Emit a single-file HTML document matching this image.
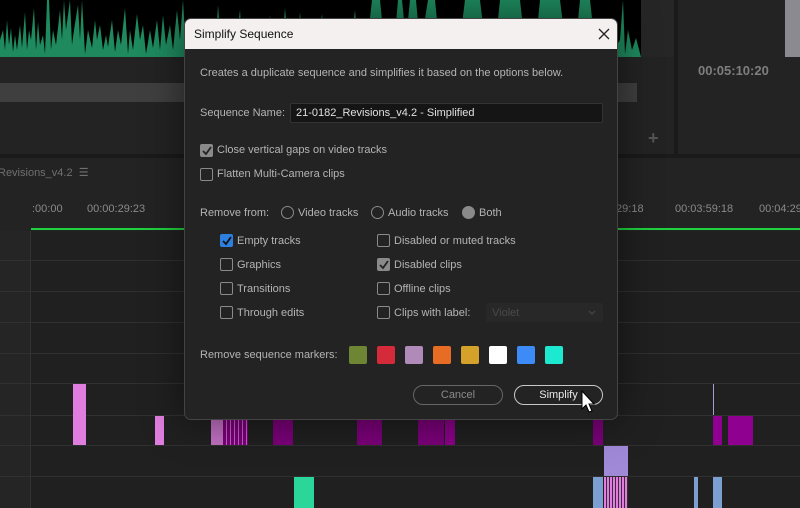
<!DOCTYPE html>
<html><head><meta charset="utf-8"><style>
*{margin:0;padding:0;box-sizing:border-box}
body{width:800px;height:508px;overflow:hidden;background:#232323;font-family:"Liberation Sans",sans-serif;position:relative}
.a{position:absolute}
.t{color:#b4b4b4;font-size:11px;white-space:nowrap}
.cb{position:absolute;width:13px;height:13px;border:1.5px solid #8a8a8a;border-radius:2px}
.cb.on{background:#8a8a8a}
.cb.blue{background:#2d7fe0;border-color:#2d7fe0}
.cb svg{position:absolute;left:1px;top:1px}
.rad{position:absolute;width:13px;height:13px;border:1.5px solid #8a8a8a;border-radius:50%}
.sw{position:absolute;top:346px;width:18px;height:18px;border-radius:2px}
.hl{position:absolute;left:0;width:800px;height:1px;background:#303030}
.clip{position:absolute}
.btn{position:absolute;top:385px;height:20px;border-radius:10px;font-size:11px;text-align:center;line-height:18px}
</style></head><body>
<div class="a" style="left:0;top:0;width:641px;height:57px;background:#000"></div>
<svg class="a" style="left:0;top:0" width="641" height="57">
<path fill="#1e8a5e" d="M0 57V40L3 30L5 50L7 20L9 45L11 28L13 52L15 35L17 50L20 25L22 48L25 12L27 50L29 30L31 40L34 8L36 50L38 22L40 45L43 35L45 54L47 0L49 0L51 50L53 30L56 45L60 10L62 40L64 0L66 30L70 0L72 45L74 30L78 5L80 40L82 0L85 54L88 30L92 48L95 20L97 40L100 25L103 50L106 35L108 47L112 20L115 52L118 30L121 45L125 8L128 54L130 30L133 50L137 14L140 40L143 25L146 54L150 30L153 48L157 20L160 50L163 15L166 45L170 25L173 50L177 10L180 40L183 0L186 52L190 30L193 42L197 18L200 50L204 32L208 54L212 20L215 48L218 5L221 40L224 30L228 52L232 18L235 45L240 10L243 50L247 30L250 50L255 20L258 45L262 35L266 54L270 15L273 44L277 25L281 50L285 8L288 40L292 30L296 50L300 12L303 45L306 30L310 52L314 20L318 40L322 14L326 50L330 35L334 45L338 18L342 54L346 30L350 48L355 10L358 42L362 28L366 54L372 0L380 0L385 50L390 30L394 46L398 0L402 0L406 40L410 0L416 0L420 45L424 25L428 0L435 0L440 50L445 30L450 48L455 20L460 40L465 0L480 0L485 42L490 20L495 48L500 0L520 0L525 45L530 30L535 50L540 0L560 0L565 40L570 30L575 50L580 0L590 0L595 45L600 30L605 50L610 20L615 48L620 40L623 0L625 54L628 30L632 50L636 38L641 57Z"/>
</svg>
<div class="a" style="left:641px;top:0;width:33px;height:57px;background:#262626"></div>
<div class="a" style="left:674px;top:0;width:4px;height:154px;background:#1a1a1a"></div>
<div class="a" style="left:785px;top:0;width:15px;height:57px;background:#8a8a90"></div>
<div class="a" style="left:0;top:83px;width:637px;height:19px;background:#3f3f3f"></div>
<div class="a t" style="left:698px;top:63px;font-size:13px;color:#7e7e7e;font-weight:bold">00:05:10:20</div>
<div class="a" style="left:648px;top:128px;color:#555;font-size:18px;font-weight:bold">+</div>
<div class="a" style="left:0;top:154px;width:800px;height:4px;background:#1a1a1a"></div>
<div class="a t" style="left:-2px;top:166px;color:#707070">Revisions_v4.2 &nbsp;☰</div>
<div class="a t" style="left:32px;top:203px;color:#8a8a8a">:00:00</div>
<div class="a t" style="left:87px;top:203px;color:#8a8a8a">00:00:29:23</div>
<div class="a t" style="left:613px;top:203px;color:#8a8a8a">:29:18</div>
<div class="a t" style="left:675px;top:203px;color:#8a8a8a">00:03:59:18</div>
<div class="a t" style="left:759px;top:203px;color:#8a8a8a">00:04:29</div>
<div class="a" style="left:31px;top:228px;width:769px;height:2px;background:#1fd13f"></div>
<div class="a" style="left:0;top:231px;width:31px;height:277px;background:#252525;border-right:1px solid #333"></div>
<div class="a" style="left:31px;top:231px;width:769px;height:277px;background:#202020"></div>
<div class="hl" style="top:260px"></div><div class="hl" style="top:291px"></div><div class="hl" style="top:322px"></div><div class="hl" style="top:353px"></div><div class="hl" style="top:383px"></div><div class="hl" style="top:415px"></div><div class="hl" style="top:445px"></div><div class="hl" style="top:476px"></div>
<div class="clip" style="left:73px;top:384px;width:13px;height:61px;background:#e07ee0"></div>
<div class="clip" style="left:155px;top:416px;width:9px;height:29px;background:#e07ee0"></div>
<div class="clip" style="left:211px;top:416px;width:12px;height:29px;background:#c070c0"></div>
<div class="clip" style="left:223px;top:416px;width:25px;height:29px;background:repeating-linear-gradient(90deg,#7a0078 0 3px,#c060c0 3px 4px)"></div>
<div class="clip" style="left:273px;top:416px;width:20px;height:29px;background:#7a0078"></div>
<div class="clip" style="left:357px;top:416px;width:25px;height:29px;background:#7a0078"></div>
<div class="clip" style="left:418px;top:416px;width:26px;height:29px;background:#7a0078"></div>
<div class="clip" style="left:445px;top:416px;width:10px;height:29px;background:#8a0088"></div>
<div class="clip" style="left:593px;top:416px;width:10px;height:29px;background:#7a0078"></div>
<div class="clip" style="left:713px;top:384px;width:1px;height:31px;background:#a0a0d0"></div>
<div class="clip" style="left:713px;top:416px;width:9px;height:29px;background:#900090"></div>
<div class="clip" style="left:728px;top:416px;width:25px;height:29px;background:#900090"></div>
<div class="clip" style="left:604px;top:446px;width:24px;height:30px;background:#a08ad8"></div>
<div class="clip" style="left:294px;top:477px;width:20px;height:31px;background:#2bd69a"></div>
<div class="clip" style="left:593px;top:477px;width:10px;height:31px;background:#7a9fd0"></div>
<div class="clip" style="left:604px;top:477px;width:24px;height:31px;background:repeating-linear-gradient(90deg,#e07ee0 0 2px,#3a2a3a 2px 3px)"></div>
<div class="clip" style="left:694px;top:477px;width:4px;height:31px;background:#7a9fd0"></div>
<div class="clip" style="left:713px;top:477px;width:9px;height:31px;background:#7a9fd0"></div>
<div class="a" style="left:184px;top:18px;width:434px;height:402px;background:#232323;border:1px solid #444;border-radius:7px;overflow:hidden;box-shadow:0 0 40px rgba(0,0,0,.5)">
<div style="height:30px;background:#f3f0ef;position:relative">
<div class="a" style="left:9px;top:8px;font-size:12px;color:#111">Simplify Sequence</div>
<svg class="a" style="left:413px;top:9px" width="12" height="12"><path d="M1 1L11 11M11 1L1 11" stroke="#222" stroke-width="1.3"/></svg>
</div>
</div>
<div class="a t" style="left:200px;top:67px">Creates a duplicate sequence and simplifies it based on the options below.</div>
<div class="a t" style="left:200px;top:107px">Sequence Name:</div>
<div class="a" style="left:290px;top:103px;width:313px;height:20px;background:#151515;border:1px solid #333;border-radius:2px"></div>
<div class="a t" style="left:296px;top:107px;color:#e0e0e0">21-0182_Revisions_v4.2 - Simplified</div>
<div class="cb on" style="left:200px;top:144px"><svg width="10" height="10"><path d="M1 5L4 8L9 1" stroke="#232323" stroke-width="1.8" fill="none"/></svg></div>
<div class="a t" style="left:217px;top:144px">Close vertical gaps on video tracks</div>
<div class="cb" style="left:200px;top:168px"></div>
<div class="a t" style="left:217px;top:168px">Flatten Multi-Camera clips</div>
<div class="a t" style="left:200px;top:207px">Remove from:</div>
<div class="rad" style="left:281px;top:206px"></div><div class="a t" style="left:298px;top:207px">Video tracks</div>
<div class="rad" style="left:371px;top:206px"></div><div class="a t" style="left:388px;top:207px">Audio tracks</div>
<div class="rad" style="left:462px;top:206px;background:#8a8a8a"></div><div class="a t" style="left:479px;top:207px">Both</div>
<div class="cb blue" style="left:220px;top:234px"><svg width="10" height="10"><path d="M1 5L4 8L9 1" stroke="#111" stroke-width="1.8" fill="none"/></svg></div><div class="a t" style="left:237px;top:235px">Empty tracks</div>
<div class="cb" style="left:220px;top:258px"></div><div class="a t" style="left:237px;top:259px">Graphics</div>
<div class="cb" style="left:220px;top:282px"></div><div class="a t" style="left:237px;top:283px">Transitions</div>
<div class="cb" style="left:220px;top:306px"></div><div class="a t" style="left:237px;top:307px">Through edits</div>
<div class="cb" style="left:377px;top:234px"></div><div class="a t" style="left:394px;top:235px">Disabled or muted tracks</div>
<div class="cb on" style="left:377px;top:258px"><svg width="10" height="10"><path d="M1 5L4 8L9 1" stroke="#232323" stroke-width="1.8" fill="none"/></svg></div><div class="a t" style="left:394px;top:259px">Disabled clips</div>
<div class="cb" style="left:377px;top:282px"></div><div class="a t" style="left:394px;top:283px">Offline clips</div>
<div class="cb" style="left:377px;top:306px"></div><div class="a t" style="left:394px;top:307px">Clips with label:</div>
<div class="a" style="left:486px;top:303px;width:117px;height:19px;background:#282828;border-radius:2px"></div>
<div class="a t" style="left:492px;top:307px;color:#4a4a4a">Violet</div>
<svg class="a" style="left:588px;top:310px" width="8" height="6"><path d="M1 1L4 4L7 1" stroke="#4a4a4a" fill="none"/></svg>
<div class="a t" style="left:200px;top:349px">Remove sequence markers:</div>
<div class="sw" style="left:349px;background:#6e8534"></div>
<div class="sw" style="left:377px;background:#d42a39"></div>
<div class="sw" style="left:405px;background:#b08ab8"></div>
<div class="sw" style="left:433px;background:#e86d24"></div>
<div class="sw" style="left:461px;background:#d4a22a"></div>
<div class="sw" style="left:489px;background:#fff"></div>
<div class="sw" style="left:517px;background:#3d8bf7"></div>
<div class="sw" style="left:545px;background:#1de8d0"></div>
<div class="btn" style="left:413px;width:90px;border:1.5px solid #666;color:#8a8a8a">Cancel</div>
<div class="btn" style="left:514px;width:89px;border:1.5px solid #c8c8c8;color:#e8e8e8">Simplify</div>
<svg class="a" style="left:581px;top:390px" width="16" height="24"><path d="M1 1V19L5 15L8 22L11 21L8 14L13 14Z" fill="#fff" stroke="#000" stroke-width="1"/></svg>
</body></html>
